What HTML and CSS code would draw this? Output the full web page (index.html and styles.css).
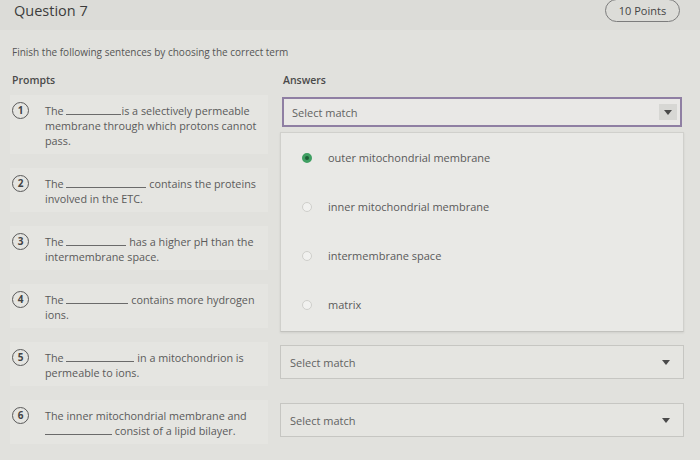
FILE: index.html
```html
<!DOCTYPE html>
<html>
<head>
<meta charset="utf-8">
<link rel="stylesheet" href="styles.css">
</head>
<body>
<div class="header">
  <h1 class="title">Question 7</h1>
  <div class="points">10 Points</div>
</div>
<p class="instructions">Finish the following sentences by choosing the correct term</p>
<div class="labels"><span>Prompts</span><span>Answers</span></div>
<div class="rows">
  <div class="row">
    <div class="prompt"><span class="num">1</span><div class="ptext">The <span class="blank w55"></span>is a selectively permeable membrane through which protons cannot pass.</div></div>
    <div class="answer">
      <div class="select active"><span>Select match</span><span class="arrowbox"><span class="tri"></span></span></div>
      <div class="listbox">
        <div class="option"><span class="radio on"></span>outer mitochondrial membrane</div>
        <div class="option"><span class="radio"></span>inner mitochondrial membrane</div>
        <div class="option"><span class="radio"></span>intermembrane space</div>
        <div class="option"><span class="radio"></span>matrix</div>
      </div>
    </div>
  </div>
  <div class="row">
    <div class="prompt"><span class="num">2</span><div class="ptext">The <span class="blank w80"></span> contains the proteins involved in the ETC.</div></div>
    <div class="answer"><div class="select"><span>Select match</span><span class="tri"></span></div></div>
  </div>
  <div class="row">
    <div class="prompt"><span class="num">3</span><div class="ptext">The <span class="blank w60"></span> has a higher pH than the intermembrane space.</div></div>
    <div class="answer"><div class="select"><span>Select match</span><span class="tri"></span></div></div>
  </div>
  <div class="row">
    <div class="prompt"><span class="num">4</span><div class="ptext">The <span class="blank w62"></span> contains more hydrogen ions.</div></div>
    <div class="answer"><div class="select"><span>Select match</span><span class="tri"></span></div></div>
  </div>
  <div class="row">
    <div class="prompt"><span class="num">5</span><div class="ptext">The <span class="blank w68"></span> in a mitochondrion is permeable to ions.</div></div>
    <div class="answer"><div class="select"><span>Select match</span><span class="tri"></span></div></div>
  </div>
  <div class="row">
    <div class="prompt"><span class="num">6</span><div class="ptext">The inner mitochondrial membrane and <span class="blank w67"></span> consist of a lipid bilayer.</div></div>
    <div class="answer"><div class="select"><span>Select match</span><span class="tri"></span></div></div>
  </div>
</div>
</body>
</html>
```
FILE: styles.css
```css
html, body {
  margin: 0;
  padding: 0;
}
body {
  width: 700px;
  height: 460px;
  overflow: hidden;
  background: #e1e1dd;
  font-family: "Open Sans", "DejaVu Sans", sans-serif;
  color: #595959;
}
.header {
  display: flex;
  justify-content: space-between;
  align-items: flex-start;
  height: 30px;
  padding: 0 20px 0 14px;
  background: #dcdcd8;
}
.title {
  margin: 0;
  font-size: 14.5px;
  font-weight: 400;
  line-height: 22px;
  color: #3c3c3c;
}
.points {
  box-sizing: border-box;
  width: 75px;
  height: 23px;
  margin-top: -1px;
  border: 1px solid #7c7c7c;
  border-radius: 12px;
  font-size: 11px;
  line-height: 21px;
  text-align: center;
  color: #444;
}
.instructions {
  margin: 15px 0 0;
  padding: 0 12px;
  font-size: 10px;
  line-height: 14px;
  color: #555;
}
.labels {
  display: grid;
  grid-template-columns: 271px 1fr;
  margin-top: 14px;
  padding-left: 12px;
  font-size: 10.5px;
  font-weight: 600;
  line-height: 14px;
  color: #4a4a4a;
}
.rows {
  display: flex;
  flex-direction: column;
  gap: 14px;
  margin-top: 8px;
  padding: 0 16px 0 10px;
}
.row {
  display: grid;
  grid-template-columns: 258px 1fr;
  column-gap: 12px;
  align-items: start;
}
.prompt {
  display: flex;
  gap: 16px;
  padding: 8px 0 6px 2px;
  background: #e5e5e1;
  font-size: 10.8px;
  line-height: 15px;
  color: #5a5a5a;
}
.num {
  flex: none;
  box-sizing: border-box;
  width: 17px;
  height: 17px;
  margin-top: -1px;
  border: 1.5px solid #5a5a5a;
  border-radius: 50%;
  font-size: 10px;
  font-weight: 700;
  line-height: 14px;
  text-align: center;
  color: #444;
}
.ptext {
  width: 222px;
}
.blank {
  display: inline-block;
  height: 11px;
  border-bottom: 1px solid #6a6a6a;
  vertical-align: baseline;
}
.w55 { width: 55px; }
.w60 { width: 60px; }
.w62 { width: 62px; }
.w67 { width: 67px; }
.w68 { width: 68px; }
.w80 { width: 80px; }
.answer {
  position: relative;
}
.select {
  box-sizing: border-box;
  display: flex;
  align-items: center;
  justify-content: space-between;
  height: 34px;
  margin-top: 3px;
  padding: 0 13px 0 9px;
  border: 1px solid #c6c6c2;
  background: #e5e5e1;
  font-size: 11px;
  color: #626262;
}
.select.active {
  height: 30px;
  margin: 2px 2px 0 2px;
  padding: 0 3px 0 8px;
  border: 2px solid #8f7fa3;
  background: #e9e8e6;
}
.arrowbox {
  display: flex;
  align-items: center;
  justify-content: center;
  width: 18px;
  height: 16px;
  background: #d7d7d4;
}
.tri {
  width: 0;
  height: 0;
  border-left: 4px solid transparent;
  border-right: 4px solid transparent;
  border-top: 5px solid #4a4a4a;
}
.listbox {
  position: absolute;
  z-index: 2;
  top: 37px;
  left: 0;
  right: 0;
  box-sizing: border-box;
  height: 200px;
  padding-left: 2px;
  border: 1px solid #d0d0cc;
  border-bottom-color: #c2c2be;
  background: #e9e9e6;
  box-shadow: 0 1px 2px rgba(0, 0, 0, 0.08);
}
.option {
  display: flex;
  align-items: center;
  gap: 16px;
  height: 49px;
  padding-left: 19px;
  font-size: 11px;
  color: #5a5a5a;
}
.radio {
  box-sizing: border-box;
  width: 10px;
  height: 10px;
  border: 1px solid #cfcfcb;
  border-radius: 50%;
  background: #f1f1ef;
}
.radio.on {
  border: 3px solid #3f9f62;
  background: #1e5f38;
}
```
